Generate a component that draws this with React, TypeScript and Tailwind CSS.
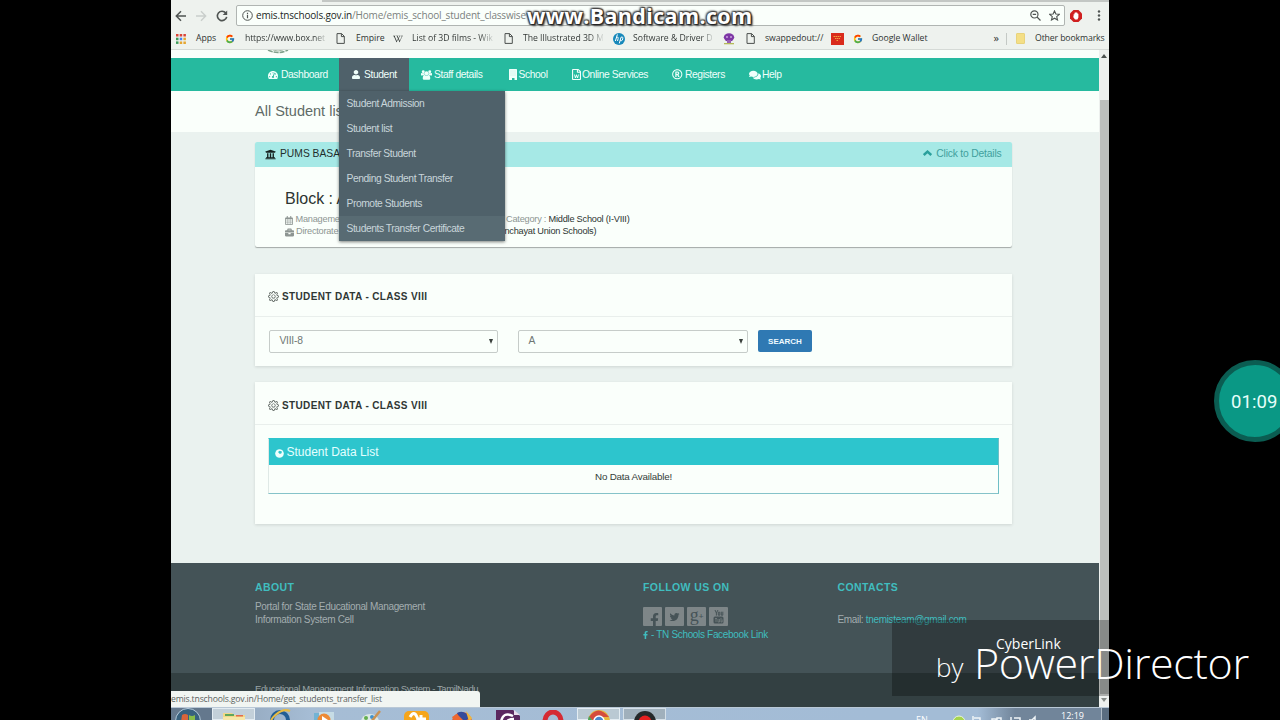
import type { ReactNode } from 'react';
import {
  FaTachometerAlt, FaUser, FaRegFileWord, FaRegRegistered, FaComments,
  FaUniversity, FaBriefcase, FaFacebookF, FaTwitter, FaWikipediaW,
} from 'react-icons/fa';
import { FcGoogle } from 'react-icons/fc';
import { SlSettings } from 'react-icons/sl';

function PageIcon() {
  return (
    <svg className="h-[11px] w-[9px] shrink-0" viewBox="0 0 9 11" fill="none" stroke="#4c504e" strokeWidth="1">
      <path d="M1 .6h4.6L8.3 3.3v7.1H1zM5.4.6v3h2.9" />
    </svg>
  );
}

function GroupIcon() {
  return (
    <svg className="h-[10px] w-[11px] shrink-0" viewBox="0 0 22 19" fill="currentColor">
      <circle cx="4.500" cy="3" r="2.900" /><circle cx="17.500" cy="3" r="2.900" /><circle cx="11" cy="6" r="4.200" />
      <path d="M0 10.500V7q0-1.700 1.500-1.500 3 1 5 .5 0 2.500 1.500 4zM22 10.500V7q0-1.700-1.500-1.500-3 1-5 .5 0 2.500-1.500 4z" />
      <path d="M3.500 16.500q0-7 3.800-7 3.700 2.300 7.400 0 3.800 0 3.800 7 0 2.500-2.500 2.500H6q-2.500 0-2.500-2.500z" />
    </svg>
  );
}

function BuildingIcon() {
  return (
    <svg className="h-[11px] w-[8px] shrink-0" viewBox="0 0 16 22" fill="currentColor">
      <path d="M1 0h14l1 1v21h-5v-4H6v4H0V1z" />
      <path d="M3 4h2M3 8h2M3 12h2M11 4h2M11 8h2M11 12h2M7 4h2M7 8h2M7 12h2" stroke="#26ba9f" strokeWidth="1" opacity=".5" />
    </svg>
  );
}

function CalendarIcon() {
  return (
    <svg className="h-[9px] w-[8px] shrink-0" viewBox="0 0 16 18" fill="none" stroke="currentColor">
      <path d="M1 4h14v13H1z" strokeWidth="1.600" /><path d="M1 5h14" strokeWidth="3" />
      <path d="M4.500 0v4M11.500 0v4" strokeWidth="2" /><path d="M1 10h14M1 13.500h14M5.500 6v11M10.500 6v11" strokeWidth="1" />
    </svg>
  );
}

function BrowserBar() {
  return (
    <header className="flex h-[50px] shrink-0 flex-col border-b border-[#d5dad6] bg-[#eef2ee] font-['Open_Sans',sans-serif]">
      <div className="flex h-[2px] shrink-0">
        <div className="w-[151px] bg-[#eef2ee]" />
        <div className="grow bg-[#c3c7c4]" />
      </div>
      <div className="flex h-[27px] shrink-0 items-center pl-[4px]">
        <svg className="h-[12px] w-[12px]" viewBox="0 0 12 12" fill="none" stroke="#4f5452" strokeWidth="1.5"><path d="M11 6H1.6M6 1.3L1.3 6 6 10.7" /></svg>
        <svg className="ml-[8px] h-[12px] w-[12px]" viewBox="0 0 12 12" fill="none" stroke="#c9cecb" strokeWidth="1.4"><path d="M1 6h9.4M6 1.3L10.7 6 6 10.7" /></svg>
        <svg className="ml-[9px] h-[12px] w-[12px]" viewBox="0 0 12 12" fill="none" stroke="#4f5452" strokeWidth="1.6"><path d="M9.800 3A4.700 4.700 0 1 0 10.700 6.800" /><path d="M11.200.6v4.500H6.700z" fill="#4f5452" stroke="none" /></svg>
        <div className="ml-[7.500px] flex h-[21px] w-[829px] items-center rounded-[2px] border border-[#b0b5b2] bg-[#fafffb] pl-[5px] pr-[4px]">
          <svg className="h-[11px] w-[11px]" viewBox="0 0 11 11" fill="none" stroke="#4f5452" strokeWidth="1"><circle cx="5.500" cy="5.500" r="4.800" /><path d="M5.500 4.800v3.400M5.500 2.700v1.200" strokeWidth="1.200" /></svg>
          <span className="ml-[3.500px] whitespace-nowrap text-[10px] tracking-[-0.180px] text-[#7b817e]"><span className="text-[#222725]">emis.tnschools.gov.in</span>/Home/emis_school_student_classwise</span>
          <svg className="ml-auto h-[11px] w-[11px]" viewBox="0 0 11 11" fill="none" stroke="#4f5452" strokeWidth="1.200"><circle cx="4.400" cy="4.400" r="3.600" /><path d="M7 7l3.500 3.500M2.700 4.400h3.400" /></svg>
          <svg className="ml-[8px] h-[11px] w-[11px]" viewBox="0 0 12 12" fill="none" stroke="#4f5452" strokeWidth="1.200"><path d="M6 1l1.500 3.400 3.700.3-2.800 2.500.9 3.700L6 8.900l-3.300 2 .9-3.700L.8 4.700l3.700-.3z" /></svg>
        </div>
        <svg className="ml-[5.500px] h-[12px] w-[12px]" viewBox="0 0 12 12"><path d="M3.500 0h5L12 3.500v5L8.500 12h-5L0 8.500v-5z" fill="#cf1f1f" /><path d="M3.600 6V4.200h.9V2.800h1V2.200h1v.6h1v1h.9V7.500L7.400 9.600H5L3.200 7z" fill="#fff" /></svg>
        <svg className="ml-[15px] h-[11px] w-[4px]" viewBox="0 0 4 11" fill="#4f5452"><circle cx="2" cy="1.500" r="1.200" /><circle cx="2" cy="5.500" r="1.200" /><circle cx="2" cy="9.500" r="1.200" /></svg>
      </div>
      <div className="flex h-[19px] shrink-0 items-center whitespace-nowrap pl-[5px] text-[8.700px] tracking-[-0.040px] text-[#2f3432]">
        <svg className="h-[10px] w-[10px] shrink-0" viewBox="0 0 10 10">
          <path d="M0 0h2.500v2.500H0zM3.700 0h2.500v2.500H3.700zM7.400 0h2.500v2.500H7.400z" fill="#db4437" />
          <path d="M0 3.700h2.500v2.500H0z" fill="#3c9a58" /><path d="M3.700 3.700h2.500v2.500H3.700z" fill="#4285f4" /><path d="M7.400 3.700h2.500v2.500H7.400z" fill="#e5a631" />
          <path d="M0 7.400h2.500v2.500H0z" fill="#3c9a58" /><path d="M3.700 7.400h2.500v2.500H3.700zM7.400 7.400h2.500v2.500H7.400z" fill="#e5a631" />
        </svg>
        <span className="ml-[10px] w-[29px]">Apps</span>
        <FcGoogle className="h-[10px] w-[10px] shrink-0" />
        <span className="ml-[10px] w-[81px] bg-[linear-gradient(90deg,#2f3432_85%,#d4d9d5)] bg-clip-text tracking-[-0.150px] text-transparent">https://www.box.net</span>
        <span className="ml-[10px]"><PageIcon /></span>
        <span className="ml-[11px] w-[37px]">Empire</span>
        <FaWikipediaW className="h-[10px] w-[10px] shrink-0" />
        <span className="ml-[9px] w-[81px] bg-[linear-gradient(90deg,#2f3432_82%,#d4d9d5)] bg-clip-text text-transparent">List of 3D films - Wik</span>
        <span className="ml-[11px]"><PageIcon /></span>
        <span className="ml-[10px] w-[80px] bg-[linear-gradient(90deg,#2f3432_82%,#d4d9d5)] bg-clip-text text-transparent">The Illustrated 3D M</span>
        <svg className="ml-[10px] h-[12px] w-[12px] shrink-0" viewBox="0 0 12 12"><circle cx="6" cy="6" r="6" fill="#1688ba" /><path d="M4.400 1.400L2.400 8M3.400 4.700c2-1 2.100 0 1.700 1L4.500 8M8 4.200L6.300 10.400M8 4.200c2-.5 2.100.3 1.700 1.700C9.300 7.800 8.500 8 7.200 7.600" fill="none" stroke="#fff" strokeWidth="1" /></svg>
        <span className="ml-[8px] w-[80px] bg-[linear-gradient(90deg,#2f3432_85%,#d4d9d5)] bg-clip-text text-transparent">Software &amp; Driver D</span>
        <svg className="ml-[10px] h-[12px] w-[12px] shrink-0" viewBox="0 0 12 12"><ellipse cx="6" cy="4.300" rx="5.200" ry="4" fill="#7d36a5" /><path d="M4 7h4v3H4z" fill="#9860b5" /><path d="M1 10h10v1.300H1z" fill="#b5ba58" /><path d="M3 4h2M7 4h2" stroke="#c9a3dd" strokeWidth="1.300" /></svg>
        <span className="ml-[11px]"><PageIcon /></span>
        <span className="ml-[10px] w-[66px]">swappedout://</span>
        <svg className="h-[12px] w-[13px] shrink-0" viewBox="0 0 13 12"><path d="M0 0h13v12H0z" fill="#d92b1c" /><path d="M2.500 3.500h8M4 5.500h5M5.500 7.500h2" stroke="#f3a13c" strokeWidth="1.200" strokeDasharray="1.500 .5" /></svg>
        <FcGoogle className="ml-[9px] h-[10px] w-[10px] shrink-0" />
        <span className="ml-[9px]">Google Wallet</span>
        <span className="ml-auto text-[11px]">»</span>
        <span className="ml-[7px] h-[12px] w-px bg-[#c4c9c5]" />
        <span className="ml-[9px] h-[11px] w-[9px] rounded-[1px] border border-[#e8d37c] bg-[#f4df86]" />
        <span className="ml-[10px] w-[74px] tracking-[-0.120px]">Other bookmarks</span>
      </div>
    </header>
  );
}

const menu = ['Student Admission', 'Student list', 'Transfer Student', 'Pending Student Transfer', 'Promote Students', 'Students Transfer Certificate'];

function NavItem({ className, icon, children }: { className: string; icon: ReactNode; children: ReactNode }) {
  return <div className={`flex h-full shrink-0 items-center whitespace-nowrap pl-[13px] ${className}`}>{icon}{children}</div>;
}

function NavBar() {
  return (
    <nav className="flex h-[33px] shrink-0 bg-[#26ba9f] pl-[84px] text-[10.300px] tracking-[-0.400px] text-[#effffb]">
      <NavItem className="w-[84px] gap-[3px]" icon={<FaTachometerAlt className="h-[10px] w-[10px]" />}>Dashboard</NavItem>
      <div className="relative h-full w-[70px] bg-[#4f616a]">
        <NavItem className="gap-[4px]" icon={<FaUser className="h-[9px] w-[8px]" preserveAspectRatio="none" />}>Student</NavItem>
        <ul className="absolute left-0 top-[33px] z-10 h-[150px] w-[166px] bg-[#4f616a] tracking-[-0.440px] text-[#c8d5da] shadow-[0_1px_3px_rgba(0,0,0,0.500)]">
          {menu.map((m, i) => (
            <li key={m} className={`flex h-[25px] items-center whitespace-nowrap pl-[7.500px] ${i === 5 ? 'bg-[#586b73]' : ''}`}>{m}</li>
          ))}
        </ul>
      </div>
      <NavItem className="w-[87px] gap-[2px] !pl-[12px]" icon={<GroupIcon />}>Staff details</NavItem>
      <NavItem className="w-[63px] gap-[1.500px]" icon={<BuildingIcon />}>School</NavItem>
      <NavItem className="w-[100px] gap-[1px]" icon={<FaRegFileWord className="h-[11px] w-[9px]" preserveAspectRatio="none" />}>Online Services</NavItem>
      <NavItem className="w-[77px] gap-[2.500px]" icon={<FaRegRegistered className="h-[10.500px] w-[10.500px]" />}>Registers</NavItem>
      <NavItem className="gap-[1px]" icon={<FaComments className="h-[10px] w-[12px]" preserveAspectRatio="none" />}>Help</NavItem>
    </nav>
  );
}

function SectionTitle({ className }: { className: string }) {
  return (
    <div className={`flex h-[43px] shrink-0 items-center border-b border-[#e9efec] pl-[13px] ${className}`}>
      <SlSettings className="h-[11px] w-[11px] text-[#4a524e]" />
      <h2 className="ml-[3px] text-[10px] font-bold tracking-[0.360px] text-[#2f3734]">STUDENT DATA - CLASS VIII</h2>
    </div>
  );
}

function SelectBox({ className, children }: { className: string; children: ReactNode }) {
  return (
    <div className={`flex h-[23px] items-center justify-between rounded-[2px] border border-[#c6ccc9] pb-px pl-[9.500px] pr-[4px] text-[10.300px] tracking-[-0.250px] text-[#6f7774] ${className}`}>
      <span>{children}</span>
      <svg className="h-[5px] w-[4px]" viewBox="0 0 4 5"><path d="M0 0h4L2 5z" fill="#3a403d" /></svg>
    </div>
  );
}

function Content() {
  return (
    <main className="flex h-[431px] shrink-0 flex-col bg-[#eaf2ef] pl-[84px] pt-[10px]">
      <section className="flex h-[105px] w-[757px] shrink-0 flex-col rounded-[2px] bg-[#fafffb] shadow-[0_1px_1px_rgba(0,0,0,0.300)]">
        <div className="flex h-[25px] shrink-0 items-center rounded-t-[2px] bg-[#a6e9e6] pb-px pl-[10px] pr-[10.500px] text-[10.300px]">
          <FaUniversity className="h-[11px] w-[11px] text-[#15201f]" />
          <span className="ml-[4px] text-[#1f2e2d]">PUMS BASA</span>
          <svg className="ml-auto mr-[4px] mt-[-2px] h-[6px] w-[9px]" viewBox="0 0 9 6" fill="none" stroke="#2ba09c" strokeWidth="2.400"><path d="M.8 5l3.700-3.400L8.200 5" /></svg>
          <span className="tracking-[-0.180px] text-[#3fa09d]">Click to Details</span>
        </div>
        <h3 className="ml-[30px] mt-[21px] text-[16px] leading-[22px] text-[#2c3431]">Block : A</h3>
        <div className="ml-[30px] mt-[4px] flex h-[12px] items-center whitespace-nowrap text-[9.200px] tracking-[-0.220px] text-[#8d9592]">
          <CalendarIcon />
          <span className="ml-[2.500px] w-[210.500px]">Manageme</span>
          <span>Category : <span className="text-[#2c3431]">Middle School (I-VIII)</span></span>
        </div>
        <div className="ml-[30px] flex h-[12px] items-center whitespace-nowrap text-[9.200px] tracking-[-0.240px] text-[#8d9592]">
          <FaBriefcase className="h-[9px] w-[9px]" />
          <span className="ml-[2px] w-[208.500px]">Directorate</span>
          <span className="text-[#2c3431]">nchayat Union Schools)</span>
        </div>
      </section>
      <section className="mt-[27px] h-[92px] w-[757px] shrink-0 bg-[#fafffb] shadow-[0_1px_3px_rgba(0,0,0,0.120)]">
        <SectionTitle className="pt-[3px]" />
        <div className="flex pl-[14px] pt-[13px]">
          <SelectBox className="w-[229px]">VIII-8</SelectBox>
          <SelectBox className="ml-[20px] w-[230px]">A</SelectBox>
          <button className="ml-[10px] h-[22px] w-[54px] rounded-[2px] bg-[#2f79b3] pt-px text-[8px] font-bold text-[#eefaff]">SEARCH</button>
        </div>
      </section>
      <section className="mt-[16px] h-[142px] w-[757px] shrink-0 bg-[#fafffb] shadow-[0_1px_3px_rgba(0,0,0,0.120)]">
        <SectionTitle className="pt-[5px]" />
        <div className="ml-[13px] mt-[13px] flex h-[56px] w-[731px] flex-col border border-l-[#dfe9e6] border-r-[#6fbfc6] border-b-[#85c3c9] border-t-[#2dc5cd]">
          <div className="flex h-[26px] shrink-0 items-center bg-[#2dc5cd] pl-[6px] text-[12px] text-[#e4ffff]">
            <svg className="mt-[2px] h-[9px] w-[9px]" viewBox="0 0 9 9"><circle cx="4.500" cy="4.500" r="4.300" fill="#effffd" /><path d="M3 3l1.600-1.200 2.300.7-.4 1.800-1.700.7z" fill="#2dc5cd" /></svg>
            <span className="ml-[2.500px]">Student Data List</span>
          </div>
          <p className="mt-[4px] text-center text-[9.800px] leading-[15px] tracking-[-0.200px] text-[#343d39]">No Data Available!</p>
        </div>
      </section>
    </main>
  );
}

function Social({ children }: { children: ReactNode }) {
  return <span className="flex h-[19px] w-[19px] items-end justify-center overflow-hidden rounded-[1px] bg-[#7e8688] pb-[2px] text-[#465357]">{children}</span>;
}

function Heading({ children }: { children: ReactNode }) {
  return <h4 className="text-[10.500px] font-bold leading-[14px] tracking-[0.400px] text-[#40bdbf]">{children}</h4>;
}

function Footer() {
  return (
    <footer className="flex grow flex-col bg-[#334042]">
      <div className="flex h-[110px] shrink-0 bg-[#445357] pl-[84px] pt-[17px] text-[10px] tracking-[-0.330px] text-[#a3adaf]">
        <div className="w-[388px]">
          <Heading>ABOUT</Heading>
          <p className="mt-[7px] whitespace-nowrap leading-[12.500px]">Portal for State Educational Management<br />Information System Cell</p>
        </div>
        <div className="w-[194.500px]">
          <Heading>FOLLOW US ON</Heading>
          <div className="mt-[13px] flex gap-[3px]">
            <Social><FaFacebookF className="mb-[-3px] ml-[3px] h-[14px] w-[9px]" /></Social>
            <Social><FaTwitter className="mb-[2px] h-[10px] w-[11px]" /></Social>
            <Social><span className="flex items-start font-['Liberation_Serif',serif]"><span className="text-[18px] leading-[15px]">g</span><span className="text-[9px] font-bold leading-[16px]">+</span></span></Social>
            <Social>
              <svg className="h-[14px] w-[11px]" viewBox="0 0 11 14"><path d="M2 0l1.400 3V5.600M5 0L3.400 3M5.300 2.200h1.500v3H5.300zM8.300 1.700v3.500h1.500V1.700" fill="none" stroke="#465357" strokeWidth="1" /><rect x=".5" y="6.500" width="10" height="7" rx="1.500" fill="#465357" /><path d="M2 8.500h2M3 8.500v3.500M5 9v3h1.500V9M8 8v4h1.200V9.500" fill="none" stroke="#7e8688" strokeWidth=".7" /></svg>
            </Social>
          </div>
          <div className="mt-px flex h-[15px] items-center whitespace-nowrap tracking-[-0.330px] text-[#40bdbf]">
            <FaFacebookF className="mr-[3px] h-[10px] w-[5px]" />- TN Schools Facebook Link
          </div>
        </div>
        <div>
          <Heading>CONTACTS</Heading>
          <p className="mt-[18px] whitespace-nowrap leading-[15px]">Email: <span className="text-[#40bdbf]">tnemisteam@gmail.com</span></p>
        </div>
      </div>
      <p className="pl-[84px] pt-[9px] text-[9.500px] leading-[14px] tracking-[-0.420px] text-[#9ba5a7]">Educational Management Information System - TamilNadu</p>
    </footer>
  );
}

function Taskbar() {
  return (
    <div className="flex h-[13px] shrink-0 overflow-hidden border-t border-[#b9c8d6] bg-[linear-gradient(90deg,#8497ab_0,#a6bdd5_15%,#a3bcd6_75%,#a3bcd6_86%,#71859a_90%,#71859a_100%)]">
      <div className="flex w-[41px] shrink-0 justify-center bg-[#64788d] pr-[7px]">
        <svg className="h-[26px] w-[26px]" viewBox="0 0 26 26"><circle cx="13" cy="13" r="12.500" fill="#37617e" stroke="#b5cbdb" /><path d="M7 7q3-2 6 0v7H6z" fill="#d8643a" /><path d="M14 7q3 2 6 0v7h-6z" fill="#87bd49" /></svg>
      </div>
      <div className="flex w-[43px] shrink-0 justify-center border border-[#e3ecf2] bg-[#c3d0d9]">
        <svg className="mt-[3px] h-[20px] w-[24px]" viewBox="0 0 24 20"><path d="M1 1h9l2 2h11v17H1z" fill="#f1d889" /><path d="M3 2h9v2H3z" fill="#60a75b" /><path d="M14 3h7v1.500h-7z" fill="#e36c4d" /><path d="M1 5h22v15H1z" fill="#f7e7a8" /></svg>
      </div>
      <svg className="ml-[14px] h-[22px] w-[22px] shrink-0" viewBox="0 0 22 22"><circle cx="11" cy="12" r="8" fill="none" stroke="#235e94" strokeWidth="4" /><path d="M2 18C-2 12 12-1 21 3" fill="none" stroke="#e8bb42" strokeWidth="2" /></svg>
      <svg className="ml-[23px] mt-[4px] h-[18px] w-[20px] shrink-0" viewBox="0 0 20 18"><path d="M0 1h15v17H0z" fill="#72b3d4" /><path d="M5 0h15v17H5z" fill="#c6dce5" /><circle cx="10" cy="8" r="6.500" fill="#ed8a36" /><path d="M8 4l6 4-6 4z" fill="#fff" /></svg>
      <svg className="ml-[26px] mt-[1px] h-[22px] w-[24px] shrink-0" viewBox="0 0 24 22"><ellipse cx="10" cy="13" rx="9" ry="8" fill="#dce8e6" /><circle cx="6" cy="9" r="2" fill="#64ae50" /><circle cx="12" cy="8" r="2" fill="#4293ce" /><path d="M11 13L20 2" stroke="#c99355" strokeWidth="2.500" /></svg>
      <svg className="ml-[20px] mt-[3px] h-[20px] w-[25px] shrink-0" viewBox="0 0 25 20"><rect width="25" height="22" rx="5" fill="#f6a51b" /><path d="M6 6q4-7 7 0t-4 6M17 4v8M14 8h8" fill="none" stroke="#fff" strokeWidth="3" /></svg>
      <svg className="ml-[21px] mt-[1px] h-[22px] w-[24px] shrink-0" viewBox="0 0 24 22"><circle cx="12" cy="13" r="10" fill="#e45c2c" /><path d="M7 4q8-4 12 5l-7 6z" fill="#354b9c" /><path d="M2 8l5-3 6 6-5 8z" fill="#ee6830" /><path d="M16 2l6 7-3 4z" fill="#f0b63c" /></svg>
      <svg className="ml-[22px] mt-[2px] h-[20px] w-[24px] shrink-0" viewBox="0 0 24 20"><path d="M0 0h17l7 6v14H0z" fill="#5b285f" /><path d="M18 0l6 5h-6z" fill="#e7dcea" /><path d="M17 6Q7 1 5 12M18 9q-8 0-7 5" fill="none" stroke="#fff" strokeWidth="2.500" /></svg>
      <svg className="ml-[22px] mt-[2px] h-[22px] w-[22px] shrink-0" viewBox="0 0 22 22"><ellipse cx="11" cy="11" rx="8" ry="9" fill="none" stroke="#d52b34" strokeWidth="5" /></svg>
      <div className="ml-[13px] flex w-[43px] shrink-0 justify-center border border-[#e3ecf2] bg-[#bac9d3]">
        <svg className="mt-[1px] h-[22px] w-[22px]" viewBox="0 0 22 22"><circle cx="11" cy="11" r="11" fill="#e7b93d" /><path d="M1 7Q10-6 21 7H11l-4 5z" fill="#d44c3c" /><path d="M1 6l7 9v6Q-3 17 1 6z" fill="#4aa35a" /><circle cx="11" cy="11" r="5" fill="#4a88ce" stroke="#fff" strokeWidth="1.500" /></svg>
      </div>
      <div className="ml-[3px] flex w-[43px] shrink-0 justify-center border border-[#d5e0e8] bg-[#a0b0bc]">
        <svg className="mt-[2px] h-[22px] w-[22px]" viewBox="0 0 22 22"><circle cx="11" cy="11" r="11" fill="#25292a" /><circle cx="11" cy="11" r="6.500" fill="#e51f20" /></svg>
      </div>
      <div className="ml-auto flex w-[193px] shrink-0 font-['Open_Sans',sans-serif] text-[9px] leading-[12px] text-white">
        <span className="mt-[6px] w-[37px]">EN</span>
        <svg className="mt-[6px] h-[12px] w-[86px]" viewBox="0 0 86 12"><circle cx="6" cy="8" r="6" fill="#a6d44e" stroke="#eaf6d7" /><path d="M20 2v10M21 4h6v4h-6M39 5h4v7h-4zM44 4h4v8h-4zM58 3v9M61 4h6v8h-6M76 6h3l3-3v9" fill="none" stroke="#f0f5f8" strokeWidth="1.500" /></svg>
        <span className="ml-[22px] mt-[2px]">12:19</span>
        <span className="ml-auto w-[8px] border-l border-[#aebbc6] bg-[#5a6d80]" />
      </div>
    </div>
  );
}

export default function App() {
  return (
    <div className="relative flex h-[720px] w-[1280px] overflow-hidden bg-black pl-[171px] font-['Liberation_Sans',Arial,sans-serif]">
      <div className="flex h-full w-[938px] flex-col">
        <BrowserBar />
        <div className="flex h-[657px] shrink-0">
          <div className="relative flex w-[928px] flex-col overflow-hidden bg-[#fafffb]">
            <div className="h-[8px] shrink-0 pl-[93px]">
              <svg className="h-[4px] w-[28px]" viewBox="0 0 28 4"><path d="M4 0Q14 5 24 0" fill="none" stroke="#7fa08a" strokeWidth="1.500" strokeDasharray="5 1" /><path d="M9 0q5 2 10 0" fill="none" stroke="#a5bba9" /></svg>
            </div>
            <NavBar />
            <h1 className="h-[41px] shrink-0 pl-[84px] pt-[10px] text-[14.500px] leading-[20px] text-[#5f6b67]">All Student list</h1>
            <Content />
            <Footer />
            <div className="absolute bottom-0 left-0 flex h-[16px] w-[309px] items-center rounded-tr-[3px] bg-[#f1f5f2] pt-px font-['Open_Sans',sans-serif] text-[8.700px] tracking-[-0.190px] text-[#5b625f]">emis.tnschools.gov.in/Home/get_students_transfer_list</div>
          </div>
          <div className="flex w-[10px] flex-col items-center bg-[#edf0ee]">
            <svg className="mt-[4px] h-[4px] w-[6px]" viewBox="0 0 6 4"><path d="M0 4h6L3 0z" fill="#4c5250" /></svg>
            <div className="ml-[1px] mt-[42px] h-[594px] w-[9px] bg-[#bcbfbd]" />
            <svg className="mt-[4px] h-[4px] w-[6px]" viewBox="0 0 6 4"><path d="M0 0h6L3 4z" fill="#858a87" /></svg>
          </div>
        </div>
        <Taskbar />
      </div>

      <div className="absolute left-[527px] top-[2px] whitespace-nowrap font-['Open_Sans',sans-serif] text-[21.500px] font-bold leading-[27px] tracking-[0.350px] text-white [text-shadow:1px_1px_1px_#222,-1px_-1px_2px_#444,1px_-1px_1px_#444,-1px_1px_1px_#444,0_0_3px_#444,2px_2px_2px_#555]">www.Bandicam.com</div>

      <div className="absolute left-[1214px] top-[360px] flex h-[82px] w-[82px] items-center rounded-full border-[5px] border-[#0b5d52] bg-[#0a9885] pl-[12px] pt-[3px] font-[Roboto,sans-serif] text-[18.500px] tracking-[0.100px] text-[#e6fffa]">01:09</div>

      <div className="absolute left-[892px] top-[620px] h-[76px] w-[388px] bg-black/28 font-['Open_Sans',sans-serif] text-white">
        <span className="absolute left-[104px] top-[15px] text-[14px] leading-[18px]">CyberLink</span>
        <span className="absolute left-[44px] top-[30px] text-[26px] font-light leading-[34px]">by</span>
        <span className="absolute left-[82px] top-[17px] whitespace-nowrap text-[43px] font-light leading-[52px] tracking-[-0.320px]">PowerDirector</span>
      </div>
    </div>
  );
}
